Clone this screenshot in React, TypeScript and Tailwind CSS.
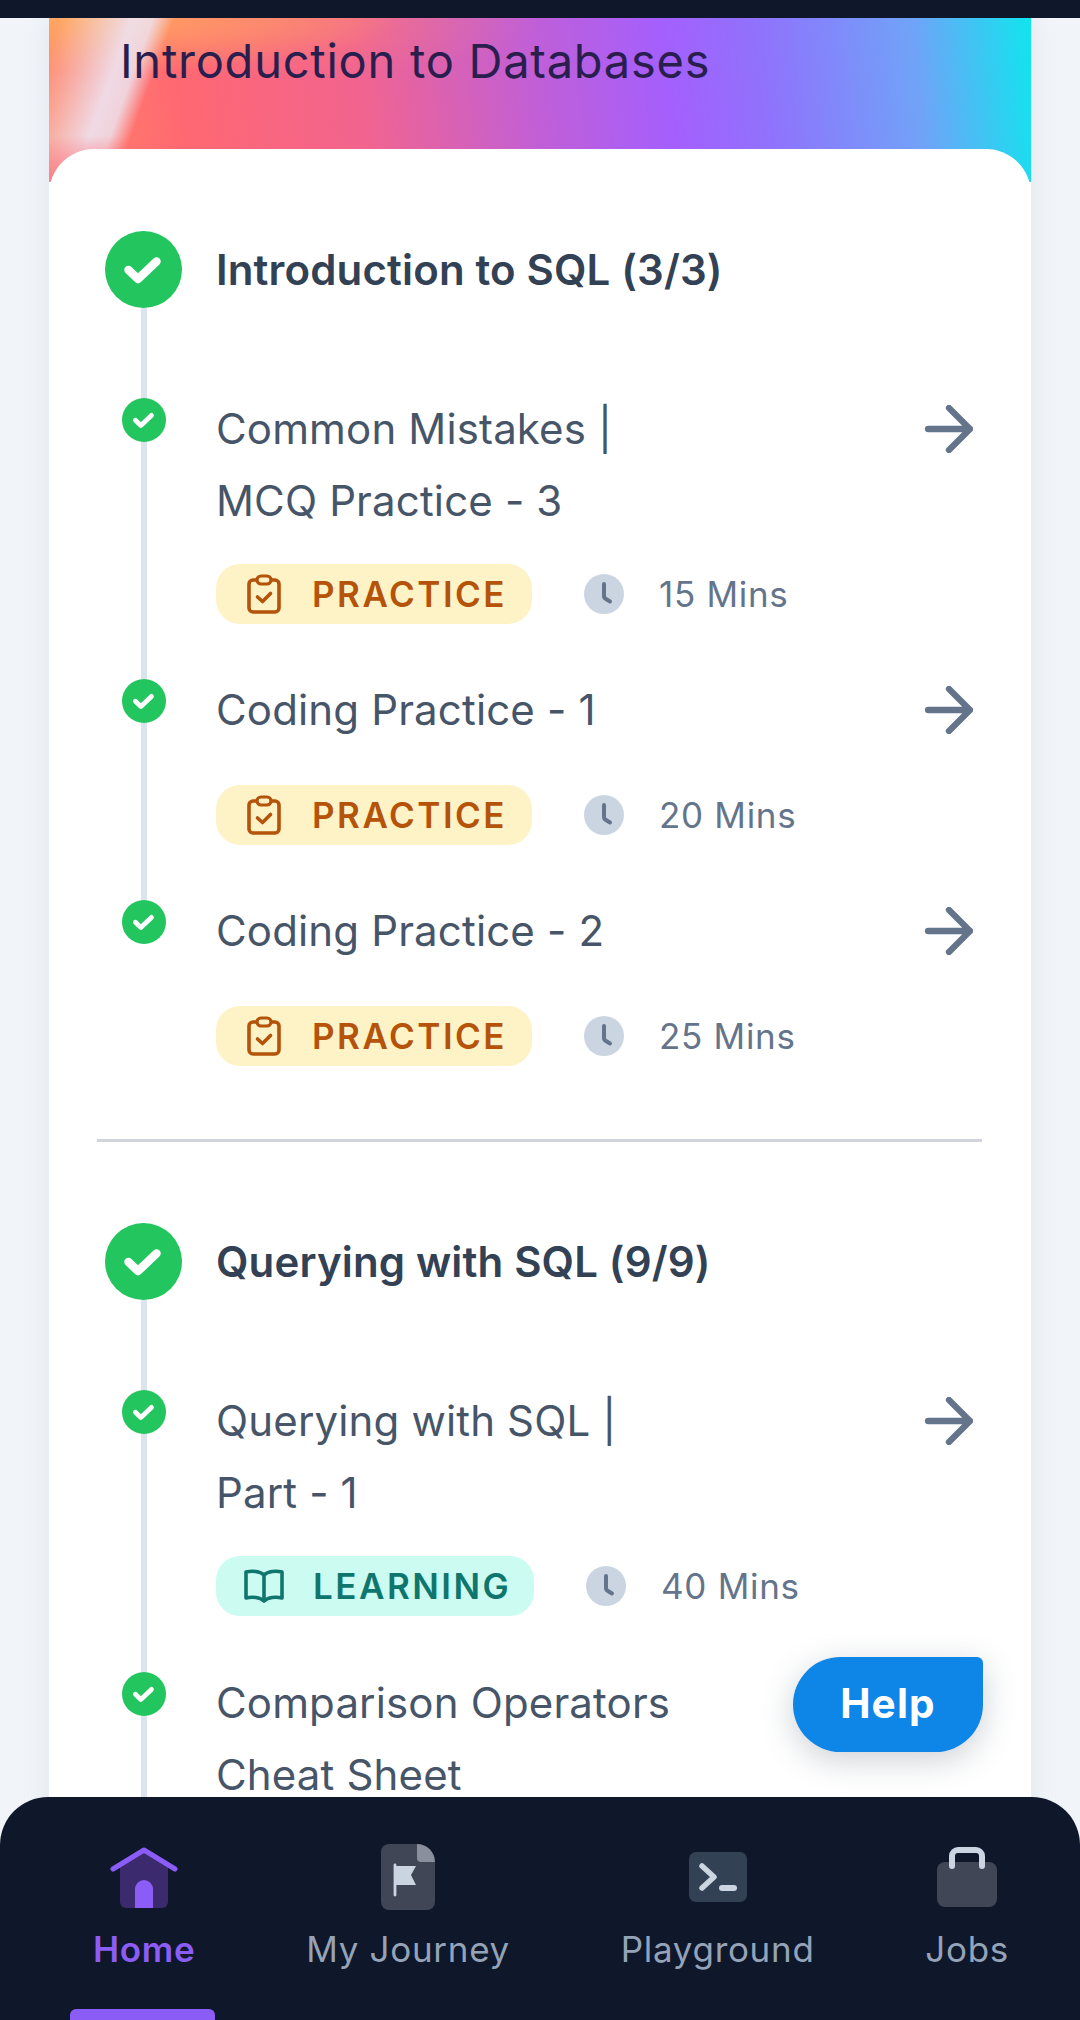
import { ReactNode } from "react";

const font = { fontFamily: "Inter, 'Noto Sans', sans-serif" };

function CheckMark({ size }: { size: number }) {
  return (
    <svg width={size} height={size} viewBox="0 0 77 77" fill="none">
      <path d="M23.500 39l9.500 9 18.500-17.500" stroke="#fff" strokeWidth="8.500" strokeLinecap="round" strokeLinejoin="round" />
    </svg>
  );
}

function ArrowIcon() {
  return (
    <svg width="48" height="48" viewBox="4 4 16 16" fill="none" className="shrink-0">
      <path d="M5 12h14M12 5l7 7-7 7" stroke="#64748b" strokeWidth="2.100" strokeLinecap="round" strokeLinejoin="round" />
    </svg>
  );
}

function ClockIcon() {
  return (
    <svg width="40" height="40" viewBox="0 0 40 40" fill="none" className="shrink-0">
      <circle cx="20" cy="20" r="20" fill="#cbd5e1" />
      <path d="M20 10v12q0 2 2 3l4 2.500" stroke="#64748b" strokeWidth="4" strokeLinecap="round" strokeLinejoin="round" />
    </svg>
  );
}

function ClipboardIcon() {
  return (
    <svg width="34" height="40" viewBox="0 0 34 40" fill="none" className="shrink-0">
      <rect x="2" y="6" width="30" height="32" rx="4" stroke="#b45309" strokeWidth="3.600" />
      <rect x="10" y="2" width="14" height="8" rx="4" fill="#fef3c7" stroke="#b45309" strokeWidth="3.200" />
      <path d="M10.500 23l5 4.500 8-8" stroke="#b45309" strokeWidth="3.600" strokeLinecap="round" strokeLinejoin="round" />
    </svg>
  );
}

function BookIcon() {
  return (
    <svg width="40" height="34" viewBox="0 0 40 34" fill="none" className="shrink-0">
      <path d="M20 6C16 2 8 1.500 2 3v26c6-1.500 14-1 18 3 4-4 12-4.500 18-3V3C32 1.500 24 2 20 6z" stroke="#0f766e" strokeWidth="3.600" strokeLinejoin="round" />
      <path d="M20 6v26" stroke="#0f766e" strokeWidth="3.600" />
    </svg>
  );
}

function Chip({ kind }: { kind: "practice" | "learning" }) {
  const practice = kind === "practice";
  return (
    <div className={`flex h-[60px] items-center rounded-[24px] ${practice ? "w-[316px] gap-[31px] bg-[#fef3c7] pl-[31px] text-[#b45309]" : "w-[318px] gap-[29px] bg-[#ccfbf1] pl-[28px] text-[#0f766e]"}`}>
      {practice ? <ClipboardIcon /> : <BookIcon />}
      <span className="text-[35px] font-semibold leading-none tracking-[2.500px]">{practice ? "PRACTICE" : "LEARNING"}</span>
    </div>
  );
}

function SectionHead({ title, line }: { title: string; line: number }) {
  return (
    <div className="flex gap-[34px]">
      <div className="flex w-[77px] shrink-0 flex-col items-center">
        <div className="flex h-[77px] w-[77px] items-center justify-center rounded-full bg-[#22c55e]">
          <CheckMark size={77} />
        </div>
        <div className="w-[6px] bg-[#dbe4ee]" style={{ height: line }} />
      </div>
      <h2 className="h-[77px] text-[42px] font-semibold leading-[77px] tracking-[0.150px] text-[#334155]">{title}</h2>
    </div>
  );
}

function Item({ lines, kind, mins, last, gapBelow, noArrow }: { lines: ReactNode; kind?: "practice" | "learning"; mins?: string; last?: boolean; gapBelow: number; noArrow?: boolean }) {
  return (
    <div className="flex gap-[34px]">
      <div className="flex w-[77px] shrink-0 flex-col items-center">
        <div className="flex h-[44px] w-[44px] shrink-0 items-center justify-center rounded-full bg-[#22c55e]">
          <CheckMark size={44} />
        </div>
        {!last && <div className="w-[6px] flex-1 bg-[#dbe4ee]" />}
      </div>
      <div className="-mt-[5px] min-w-0 flex-1 pr-[58px]" style={{ paddingBottom: gapBelow }}>
        <div className="flex min-h-[84px] items-start justify-between">
          <div className="text-[42px] leading-[72px] tracking-[0.150px] text-[#475569]">{lines}</div>
          {!noArrow && <div className="flex h-[72px] items-center"><ArrowIcon /></div>}
        </div>
        {kind && (
          <div className="mt-[27px] flex items-center gap-[52px]">
            <Chip kind={kind} />
            <div className="flex items-center gap-[35px]">
              <ClockIcon />
              <span className="text-[35px] tracking-[0.700px] text-[#64748b]">{mins}</span>
            </div>
          </div>
        )}
      </div>
    </div>
  );
}

function NavItem({ icon, label, active }: { icon: ReactNode; label: string; active?: boolean }) {
  return (
    <div className="relative flex flex-col items-center">
      <div className="flex h-[66px] items-center">{icon}</div>
      <span className={`mt-[17px] text-[35px] leading-[44px] tracking-[0.700px] ${active ? "font-semibold text-[#8b5cf6]" : "text-[#94a3b8]"}`}>{label}</span>
      {active && <div className="absolute -left-[23px] top-[165px] h-[12px] w-[145px] rounded-t-[6px] bg-[#8b5cf6]" />}
    </div>
  );
}

const HomeIcon = (
  <svg width="68" height="62" viewBox="0 0 68 62" fill="none">
    <path d="M10 20L34 6l24 14v36a6 6 0 0 1-6 6H16a6 6 0 0 1-6-6z" fill="#3b2a6e" />
    <path d="M3 23L34 4l31 19" stroke="#8b5cf6" strokeWidth="5" strokeLinecap="round" strokeLinejoin="round" />
    <path d="M25 62V43a9 9 0 0 1 18 0v19z" fill="#8b5cf6" />
  </svg>
);

const JourneyIcon = (
  <svg width="54" height="66" viewBox="0 0 54 66" fill="none">
    <path d="M8 0h28l18 18v40a8 8 0 0 1-8 8H8a8 8 0 0 1-8-8V8a8 8 0 0 1 8-8z" fill="#414657" />
    <path d="M36 0c10 0 18 8 18 18H40a4 4 0 0 1-4-4z" fill="#8a8f9e" />
    <path d="M14 21v30" stroke="#cbd5e1" strokeWidth="2.800" strokeLinecap="round" />
    <path d="M15 22h20l-5 9 5 10H15z" fill="#cbd5e1" />
  </svg>
);

const TerminalIcon = (
  <svg width="58" height="50" viewBox="0 0 58 50" fill="none">
    <rect width="58" height="50" rx="7" fill="#334155" />
    <path d="M13 14l12 11-12 11" stroke="#cbd5e1" strokeWidth="5.500" strokeLinecap="round" strokeLinejoin="round" />
    <path d="M33 36h12" stroke="#cbd5e1" strokeWidth="6" strokeLinecap="round" />
  </svg>
);

const JobsIcon = (
  <svg width="60" height="60" viewBox="0 0 60 60" fill="none">
    <rect y="15" width="60" height="45" rx="8" fill="#414657" />
    <path d="M15 19V9a6 6 0 0 1 6-6h18a6 6 0 0 1 6 6v10" stroke="#cbd5e1" strokeWidth="6" strokeLinecap="round" />
  </svg>
);

export default function App() {
  return (
    <div style={font} className="relative h-[2020px] w-[1080px] overflow-hidden bg-[#f1f5f9]">
      <div className="relative z-10 h-[18px] bg-[#0f172a]" />

      <div className="mx-[49px] bg-white shadow-[0_0_24px_rgba(148,163,184,0.2)]">
        <div className="h-[164px] bg-[radial-gradient(ellipse_at_5%_100%,rgba(255,105,115,0.9),transparent_20%),linear-gradient(110deg,transparent_1%,rgba(238,226,238,0.92)_8%,rgba(238,226,238,0.85)_10%,transparent_12%),radial-gradient(ellipse_at_3%_0%,rgba(255,170,95,0.95),transparent_24%),radial-gradient(ellipse_at_22%_0%,rgba(255,150,105,0.3),transparent_26%),linear-gradient(84deg,#ff8a68_0%,#ff6872_14%,#f2648f_32%,#c05fd8_50%,#a45ffd_63%,#8f73fc_73%,#70a3f8_88%,#10e5ee_100%)] pl-[71px] pt-[14px]">
          <h1 className="text-[47px] leading-[58px] tracking-[0.750px] text-[#2a1e4e]">Introduction to Databases</h1>
        </div>

        <div className="-mt-[33px] h-[1900px] rounded-t-[45px] bg-white pl-[56px] pt-[82px]">
          <SectionHead title="Introduction to SQL (3/3)" line={90} />
          <Item gapBelow={55} kind="practice" mins="15 Mins" lines={<>Common Mistakes |<br />MCQ Practice - 3</>} />
          <Item gapBelow={55} kind="practice" mins="20 Mins" lines="Coding Practice - 1" />
          <Item gapBelow={73} last kind="practice" mins="25 Mins" lines="Coding Practice - 2" />

          <div className="-ml-[8px] mr-[49px] h-[3px] bg-[#d1d5db]" />

          <div className="mt-[81px]">
            <SectionHead title="Querying with SQL (9/9)" line={90} />
            <Item gapBelow={56} kind="learning" mins="40 Mins" lines={<>Querying with SQL |<br />Part - 1</>} />
            <Item gapBelow={0} noArrow lines={<>Comparison Operators<br />Cheat Sheet</>} />
          </div>
        </div>
      </div>

      <button className="absolute left-[793px] top-[1657px] h-[95px] w-[190px] rounded-bl-[48px] rounded-br-[48px] rounded-tl-[48px] rounded-tr-[6px] bg-[#0e86e8] text-[40.500px] font-bold tracking-[1.200px] text-white shadow-[0_8px_32px_rgba(71,85,105,0.28)]">
        Help
      </button>

      <nav className="absolute inset-x-0 bottom-0 flex h-[223px] justify-between rounded-t-[48px] bg-[#0f172a] pl-[93px] pr-[71px] pt-[47px]">
        <NavItem active label="Home" icon={HomeIcon} />
        <NavItem label="My Journey" icon={JourneyIcon} />
        <NavItem label="Playground" icon={TerminalIcon} />
        <NavItem label="Jobs" icon={JobsIcon} />
      </nav>
    </div>
  );
}
